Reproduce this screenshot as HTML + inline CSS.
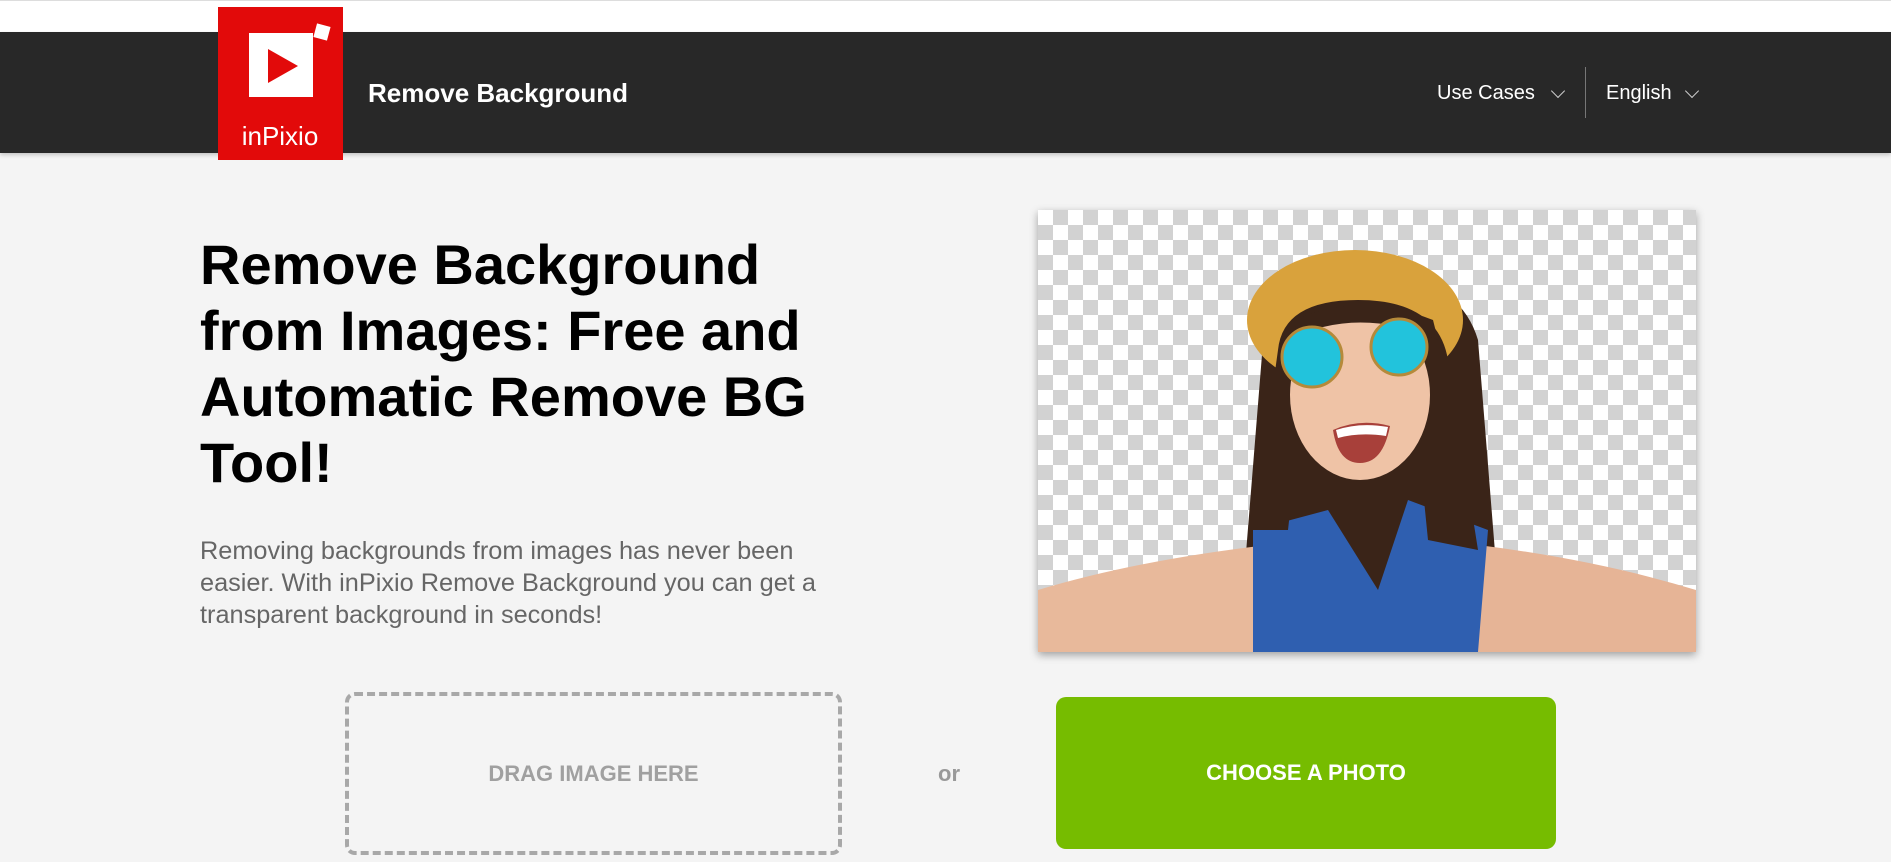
<!DOCTYPE html>
<html><head><meta charset="utf-8"><style>
*{margin:0;padding:0;box-sizing:border-box}
body{width:1891px;height:862px;overflow:hidden;background:#f4f4f4;font-family:"Liberation Sans",Arial,sans-serif;position:relative}
.top{position:absolute;left:0;top:0;width:1891px;height:32px;background:#fff;border-top:1px solid #ddd}
.hdr{position:absolute;left:0;top:32px;width:1891px;height:121px;background:#282828;box-shadow:0 2px 4px rgba(0,0,0,.2)}
.logo{position:absolute;left:218px;top:7px;width:125px;height:153px;background:#e20a0a}
.ttl{position:absolute;left:368px;top:78px;color:#fff;font-weight:bold;font-size:26px}
.nav{position:absolute;top:82px;color:#fff;font-size:20px}
.chev{position:absolute;top:86px;width:10px;height:10px;border-right:1.5px solid #ccc;border-bottom:1.5px solid #ccc;transform:rotate(45deg)}
h1{position:absolute;left:200px;top:232px;font-size:56px;line-height:66px;font-weight:bold;color:#000;width:660px}
p{position:absolute;left:200px;top:535px;font-size:25.3px;line-height:32px;color:#666;width:640px}
.img{position:absolute;left:1038px;top:210px;width:658px;height:442px;box-shadow:0 3px 8px rgba(0,0,0,.35);overflow:hidden;
background-color:#fff;background-image:linear-gradient(45deg,#d2d2d2 25%,transparent 25%,transparent 75%,#d2d2d2 75%),linear-gradient(45deg,#d2d2d2 25%,transparent 25%,transparent 75%,#d2d2d2 75%);background-size:30px 30px;background-position:0 0,15px 15px}
.drag{position:absolute;left:345px;top:692px;width:497px;height:163px;border:4px dashed #a8a8a8;border-radius:10px;color:#a0a0a0;font-weight:bold;font-size:22px;display:flex;align-items:center;justify-content:center}
.or{position:absolute;left:938px;top:761px;color:#999;font-size:22px;font-weight:bold}
.btn{position:absolute;left:1056px;top:697px;width:500px;height:152px;background:#76bc00;border-radius:10px;color:#fff;font-weight:bold;font-size:22px;display:flex;align-items:center;justify-content:center}
</style></head><body>
<div class="top"></div>
<div class="hdr"></div>
<div class="logo">
<svg width="125" height="153" viewBox="0 0 125 153">
<rect x="31" y="26" width="64" height="64" fill="#fff"/>
<rect x="97" y="18" width="14" height="14" fill="#fff" transform="rotate(15 104 25)"/>
<polygon points="50,42 50,76 80,59" fill="#e20a0a"/>
<text x="62" y="138" fill="#fff" font-family="Liberation Sans,Arial,sans-serif" font-size="26" text-anchor="middle">inPixio</text>
</svg></div>
<div class="ttl">Remove Background</div>
<div class="nav" style="left:1437px">Use Cases</div><div class="chev" style="left:1553px"></div>
<div style="position:absolute;left:1585px;top:67px;width:1px;height:51px;background:#777"></div>
<div class="nav" style="left:1606px">English</div><div class="chev" style="left:1687px"></div>
<h1>Remove Background from Images: Free and Automatic Remove BG Tool!</h1>
<p>Removing backgrounds from images has never been easier. With inPixio Remove Background you can get a transparent background in seconds!</p>
<div class="img">
<svg width="658" height="442" viewBox="0 0 658 442">
<path d="M226 120 Q230 60 320 62 Q420 62 440 130 L465 442 L200 442 Z" fill="#3a2418"/>
<path d="M0 380 Q100 350 230 335 L250 442 L0 442 Z" fill="#e8b99b"/>
<path d="M658 380 Q560 350 440 335 L420 442 L658 442 Z" fill="#e6b496"/>
<path d="M215 320 L290 300 L340 380 L370 290 L450 320 L440 442 L215 442 Z" fill="#2f5fb0"/>
<ellipse cx="317" cy="110" rx="108" ry="70" fill="#d9a23c"/>
<path d="M240 140 Q245 90 320 90 Q400 90 410 150 L440 340 L390 330 L380 230 L260 230 L250 320 L215 320 Z" fill="#3a2418"/>
<ellipse cx="322" cy="185" rx="70" ry="85" fill="#efc3a6"/>
<path d="M250 130 Q320 95 400 130 L395 110 Q320 80 252 112 Z" fill="#3a2418"/>
<circle cx="274" cy="147" r="30" fill="#22c3dc" stroke="#b58a3a" stroke-width="3"/>
<circle cx="361" cy="137" r="28" fill="#22c3dc" stroke="#b58a3a" stroke-width="3"/>
<path d="M295 220 Q322 208 352 216 Q345 253 322 253 Q300 253 295 220 Z" fill="#a8403a"/>
<path d="M298 220 Q322 212 350 217 L348 226 Q322 222 300 228 Z" fill="#fff"/>
</svg></div>
<div class="drag">DRAG IMAGE HERE</div>
<div class="or">or</div>
<div class="btn">CHOOSE A PHOTO</div>
</body></html>
